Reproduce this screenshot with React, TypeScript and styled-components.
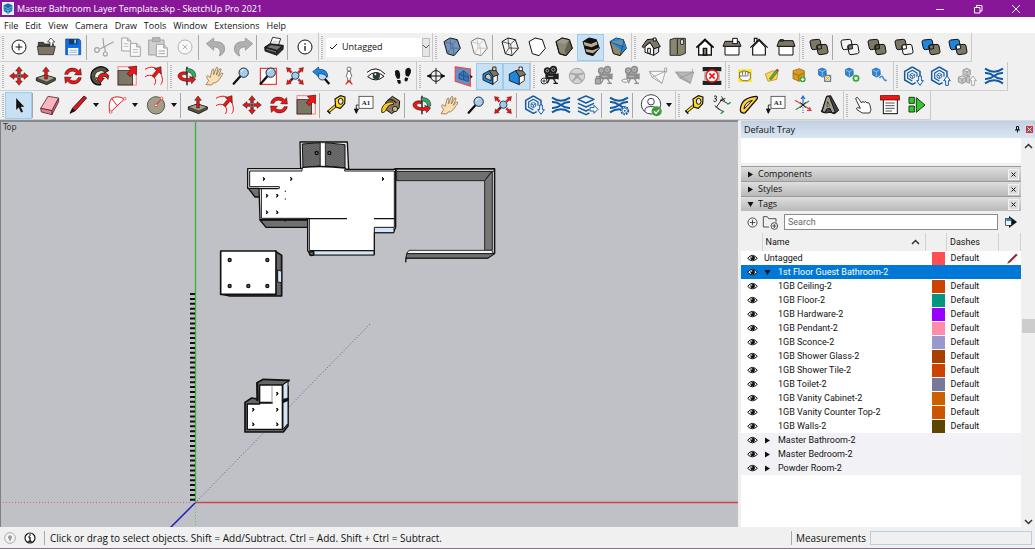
import React from "react";
import styled, { createGlobalStyle } from "styled-components";

/* ---------- palette ---------- */
const K = "#111";
const OLIVE = "#7c7865";
const OLIVE_D = "#57543f";
const RED = "#ee1515";
const BLUE = "#1f86dd";
const NAVY = "#135ba3";
const GREY = "#a3a3a3";

/* ---------- icon art, drawn in a 72 unit square ---------- */
const RedArrow = ({ angle = 0 }: { angle?: number }) => (
  <polygon
    points="36,8 46,21 40,21 40,31 32,31 32,21 26,21"
    fill={RED}
    stroke={K}
    strokeWidth="1.5"
    transform={`rotate(${angle} 36 36)`}
  />
);

const Lens = () => (
  <>
    <path d="M34 37 14 59" stroke={K} strokeWidth="7" strokeLinecap="round" />
    <circle cx="44" cy="26" r="14" fill="#a5cbea" stroke="#1a2b3c" strokeWidth="3" />
    <path d="M36 24q3-8 10-7" stroke="#eef7ff" strokeWidth="3" fill="none" />
  </>
);

const CubeLines = ({ c = K }: { c?: string }) => (
  <path
    d="M12 20 38 27 52 14M38 27 42 62M30 9 33 39 22 56M33 39 61 40"
    stroke={c}
    strokeWidth="2"
    fill="none"
  />
);
const Cube = ({ fill, stroke = K }: { fill: string; stroke?: string }) => (
  <polygon
    points="12,20 30,9 52,14 61,40 42,62 22,56"
    fill={fill}
    stroke={stroke}
    strokeWidth="3"
    strokeLinejoin="round"
  />
);

const Slab = ({ x, y, fill, stroke = K }: { x: number; y: number; fill: string; stroke?: string }) => (
  <path
    transform={`translate(${x} ${y})`}
    d="M2 8Q2 3 7 2L27 0Q32 0 33 5L36 22Q36 27 32 28L12 31Q7 31 6 26Z"
    fill={fill}
    stroke={stroke}
    strokeWidth="3"
    strokeLinejoin="round"
  />
);
const Solids = ({ a, b, m }: { a: string; b: string; m: string }) => (
  <>
    <Slab x={7} y={13} fill={a} />
    <Slab x={27} y={28} fill={b} />
    <path d="M30 31 42 29 44 41 32 43Z" fill={m} stroke={K} strokeWidth="3" />
  </>
);

const Camera = ({ c, children }: { c: string; children?: React.ReactNode }) => (
  <>
    <circle cx="28" cy="20" r="8" fill={c} stroke={c} strokeWidth="5" />
    <circle cx="46" cy="17" r="9" fill={c} stroke={c} strokeWidth="5" />
    <circle cx="28" cy="20" r="4" fill="none" stroke="#ddd" strokeWidth="2" />
    <circle cx="46" cy="17" r="5" fill="none" stroke="#ddd" strokeWidth="2" />
    <path d="M24 30H52V44H24ZM34 44 28 58M46 44 56 60M52 32 60 30V44L52 42ZM46 58H60" fill={c} stroke={c} strokeWidth="4" />
    <path d="M30 37H46" stroke="#ddd" strokeWidth="2" />
    {children}
  </>
);

const Hex = ({ children }: { children?: React.ReactNode }) => (
  <g fill="none" stroke={NAVY} strokeLinejoin="round">
    <path d="M34 9 57 22V36M34 9 11 22V48L34 61 44 56" strokeWidth="4.5" />
    <path d="M34 19 48 27V38M34 19 20 27V43L34 51" strokeWidth="3.5" />
    <path d="M34 28 41 32V40L34 44 27 40V32ZM27 32 34 36 41 32M34 36V44" strokeWidth="2.5" />
    {children}
  </g>
);
const Waves = () => (
  <path
    d="M9 14Q36 32 63 14M9 27Q24 26 36 36 48 26 63 27M9 45Q24 46 36 36 48 46 63 45M9 58Q36 40 63 58"
    fill="none"
    stroke={NAVY}
    strokeWidth="6"
  />
);
const Ball = () => (
  <>
    <path d="M13 17 24 12 36 17 37 32 26 40 14 33Z" fill="#2f83cf" stroke="#1b5da8" strokeWidth="2" />
    <path d="M15 19 25 23 35 18M25 23V38" stroke="#bfe0fa" strokeWidth="2" fill="none" />
  </>
);

const art: Record<string, React.ReactNode> = {
  new: (
    <g fill="#fff" stroke={K} strokeWidth="3">
      <circle cx="36" cy="36" r="21" />
      <path d="M36 26V46M26 36H46" />
    </g>
  ),
  open: (
    <g stroke={K} strokeWidth="2">
      <path d="M13 34V22H28L32 27H58V34Z" fill="#4c493a" />
      <path d="M10 34H64L58 59H14Z" fill={OLIVE} />
      <path d="M50 9 62 21H57Q58 34 48 36V21H41Z" fill="#fff" />
    </g>
  ),
  save: (
    <>
      <path d="M14 12H54L59 17V59H14Z" fill="#0d6fe0" stroke="#0a3f8c" strokeWidth="2" />
      <rect x="24" y="12" width="25" height="16" fill="#173a66" />
      <rect x="40" y="14" width="5" height="11" fill="#8fd0ff" />
      <rect x="21" y="39" width="31" height="20" fill="#f3f8ff" />
      <path d="M25 46H48M25 52H48" stroke="#7a96b8" strokeWidth="2" />
    </>
  ),
  cut: (
    <g fill="none" stroke={GREY} strokeWidth="3.5">
      <path d="M33 9 36 38M65 20 24 42M38 34 40 52" />
      <circle cx="15" cy="45" r="7" />
      <circle cx="40" cy="57" r="6" />
    </g>
  ),
  copy: (
    <g fill="#f8f8f8" stroke={GREY} strokeWidth="3">
      <path d="M8 9H26L35 18V48H8ZM26 9V18H35" />
      <path d="M34 25H53L64 36V64H34ZM53 25V36H64" />
      <path d="M14 26H28M14 34H28M41 44H57M41 52H57" strokeWidth="2" />
    </g>
  ),
  paste: (
    <g stroke={GREY} strokeWidth="3">
      <path d="M8 15H54V60H8Z" fill="#cfcfcf" />
      <path d="M20 8H42V20H20Z" fill="#b9b9b9" />
      <path d="M31 28H53L64 39V65H31ZM53 28V39H64M38 48H57M38 56H57" fill="#fafafa" />
    </g>
  ),
  cancel: (
    <g fill="#fafafa" stroke={GREY} strokeWidth="2.5">
      <circle cx="36" cy="36" r="21" />
      <path d="M29 29 43 43M43 29 29 43" />
    </g>
  ),
  undo: <path d="M7 26 29 9V20Q62 18 62 42 62 56 46 63 56 38 29 35V46Z" fill="#b0b0b0" stroke="#8b8b8b" strokeWidth="2" />,
  redo: <path d="M65 26 43 9V20Q10 18 10 42 10 56 26 63 16 38 43 35V46Z" fill="#b0b0b0" stroke="#8b8b8b" strokeWidth="2" />,
  print: (
    <g stroke={K} strokeWidth="2.5" strokeLinejoin="round">
      <path d="M24 28 32 7 56 11 48 34Z" fill="#fff" />
      <path d="M8 36 24 26 64 31 63 43 45 61 9 48Z" fill="#2a2a2a" />
      <path d="M12 37 26 29 60 33 45 46Z" fill="#777" />
      <path d="M14 43 42 51M33 18 50 21M31 23 48 27" stroke="#aaa" strokeWidth="2" />
    </g>
  ),
  info: (
    <g stroke={K} strokeWidth="3" fill="#fff">
      <circle cx="36" cy="36" r="21" />
      <path d="M36 33V47M36 25V29" strokeWidth="4" />
    </g>
  ),
  xray: (
    <>
      <Cube fill="#7396bd" />
      <CubeLines c="#3f5c80" />
    </>
  ),
  backEdges: (
    <>
      <Cube fill="#f7f7f7" stroke="#7a7a7a" />
      <CubeLines c="#b0b0b0" />
    </>
  ),
  wire: (
    <>
      <Cube fill="#f4f4f4" />
      <CubeLines />
    </>
  ),
  hidden: <Cube fill="#fff" />,
  shaded: (
    <>
      <Cube fill="#8c8873" />
      <path d="M52 14 61 40 42 62 38 44Z" fill="#65614d" />
      <path d="M12 20 30 9 52 14 36 27Z" fill="#a09c87" />
      <Cube fill="none" />
    </>
  ),
  textured: (
    <>
      <Cube fill="#b8ad92" />
      <path d="M12 20 30 9 52 14 54 19 36 27ZM15 31 38 37 57 28 60 38 41 46 18 42ZM20 50 42 55 58 42 42 62 22 56Z" fill={K} />
    </>
  ),
  mono: (
    <>
      <Cube fill="#8c8873" />
      <path d="M12 20 30 9 52 14 61 40 51 50Z" fill={BLUE} />
      <path d="M12 20 50 34 42 62M50 34 52 14" fill="none" stroke={K} strokeWidth="1.5" />
      <path d="M12 20 50 33 51 14Z" fill="#9b9a88" opacity=".6" />
    </>
  ),
  iso: (
    <g stroke={K} strokeWidth="3" strokeLinejoin="round">
      <path d="M18 34 35 22 44 40V61L18 52Z" fill="#fff" />
      <path d="M44 40 59 36V51L44 61Z" fill="#ddd" />
      <path d="M9 35 24 14 50 11 64 35 45 41 32 21 14 38Z" fill={OLIVE} />
      <path d="M43 9H51V18H43ZM26 40H34V56L26 53Z" fill="#fff" />
    </g>
  ),
  top: (
    <g stroke={K} strokeWidth="2.5" strokeLinejoin="round">
      <path d="M12 14 26 10H58V55L44 61H12Z" fill="#8b866f" />
      <path d="M34 12V58" />
      <path d="M44 14H52V28H44Z" fill="#fff" />
    </g>
  ),
  front: (
    <g stroke={K} strokeWidth="4">
      <path d="M17 34V60H55V34L36 16Z" fill="#fff" />
      <path d="M10 38 36 13 62 38" fill="none" strokeWidth="5" />
      <path d="M31 40H41V60H31Z" fill={OLIVE} />
    </g>
  ),
  right: (
    <g stroke={K} strokeWidth="3">
      <path d="M15 34V60H57V34Z" fill="#fff" />
      <path d="M9 34 15 19H57L63 34Z" fill={OLIVE} />
      <path d="M38 10H52V26H38Z" fill="#fff" />
    </g>
  ),
  back: (
    <g stroke={K} strokeWidth="3.5">
      <path d="M22 22V10H30V20" fill="#fff" />
      <path d="M17 36V60H55V36L36 16Z" fill="#fff" />
      <path d="M10 38 36 13 62 38" fill="none" />
    </g>
  ),
  left: (
    <g stroke={K} strokeWidth="3">
      <path d="M15 34V60H57V34Z" fill="#fff" />
      <path d="M9 34 15 17H57L63 34Z" fill={OLIVE} />
      <path d="M18 14V18H28V14Z" fill={OLIVE} />
    </g>
  ),
  outerShell: <Solids a={OLIVE} b={OLIVE} m={OLIVE} />,
  intersect: <Solids a="#f4f4f4" b="#f4f4f4" m={OLIVE} />,
  union: <Solids a={OLIVE} b={OLIVE} m={OLIVE_D} />,
  subtract: <Solids a={OLIVE} b="#f4f4f4" m="#fff" />,
  trim: <Solids a={BLUE} b={OLIVE} m={OLIVE} />,
  split: <Solids a={BLUE} b={OLIVE} m="#fff" />,

  move: (
    <>
      {[0, 90, 180, 270].map((a) => (
        <RedArrow key={a} angle={a} />
      ))}
      <circle cx="36" cy="36" r="3" fill={K} />
    </>
  ),
  push: (
    <>
      <path d="M7 42 34 33 64 42V49L38 62 7 50Z" fill={OLIVE_D} stroke={K} strokeWidth="2.5" />
      <path d="M7 42 34 33 64 42 38 54Z" fill="#a5a18c" stroke={K} strokeWidth="1.5" />
      <path d="M36 9 46 22H40V45H32V22H26Z" fill={RED} stroke={K} strokeWidth="1.5" />
    </>
  ),
  rotate: (
    <g fill={RED} stroke={K} strokeWidth="1.5">
      <path d="M11 31C15 9 44 8 52 20L59 14 61 33 41 32 46 26C38 19 24 20 21 31Z" />
      <path d="M61 41C57 63 28 64 20 52L13 58 11 39 31 40 26 46C34 53 48 52 51 41Z" />
    </g>
  ),
  follow: (
    <>
      <path d="M57 24C46 4 12 16 14 38 15 54 28 60 38 56" fill="none" stroke={K} strokeWidth="15" />
      <path d="M55 22C44 8 14 18 15 38 16 52 28 57 36 55" fill="none" stroke={OLIVE_D} strokeWidth="9" />
      <path d="M62 34C50 20 30 28 31 42L24 41 37 57 49 42 42 43C44 34 54 36 60 46Z" fill={RED} stroke={K} strokeWidth="2" />
    </>
  ),
  scale: (
    <>
      <rect x="9" y="8" width="55" height="55" fill="none" stroke="#ff7d7d" strokeWidth="3" />
      <rect x="9" y="20" width="44" height="43" fill={OLIVE} stroke={K} strokeWidth="2" />
      <path d="M65 6 64 33 57 27 46 38 36 29 47 18 40 10Z" fill={RED} stroke={K} strokeWidth="1.5" />
    </>
  ),
  offset: (
    <>
      <path d="M9 16C28 4 46 10 55 26 62 38 64 54 56 62" fill="none" stroke={RED} strokeWidth="3" />
      <path d="M9 38C22 30 36 34 40 46 42 54 40 60 36 63" fill="none" stroke={RED} strokeWidth="3" />
      <path d="M57 8 58 30 51 25 37 41 30 35 44 19 37 14Z" fill={RED} stroke={K} strokeWidth="1.5" />
    </>
  ),
  orbit: (
    <>
      <path d="M36 8V64" stroke={K} strokeWidth="4" />
      <path d="M33 14C54 12 64 24 62 39L52 42C53 30 46 23 34 24Z" fill="#39a56a" stroke={K} strokeWidth="1.5" />
      <path d="M34 24C18 22 9 28 9 36 9 48 28 54 48 52L50 59 62 45 44 37 46 43C36 46 20 43 20 36 20 32 26 31 34 32Z" fill={RED} stroke={K} strokeWidth="1.5" />
    </>
  ),
  pan: (
    <path
      d="M12 62 20 50C14 42 12 36 17 35L25 40 30 18Q33 12 36 17L35 32 43 11Q47 8 48 13L43 33 53 15Q58 13 57 18L49 37 58 27Q64 26 62 31L49 50Q40 59 33 57L29 63Z"
      fill="#f8dfb4"
      stroke="#7b5a33"
      strokeWidth="2"
    />
  ),
  zoom: <Lens />,
  zoomWindow: (
    <>
      <rect x="13" y="13" width="48" height="48" fill="#fff" stroke={RED} strokeWidth="3" />
      <Lens />
    </>
  ),
  extents: (
    <>
      <path d="M30 42 18 56" stroke={K} strokeWidth="6" />
      {[45, 135, 225, 315].map((a) => (
        <path key={a} d="M36 0 44 12H39V21H33V12H28Z" fill={RED} stroke={K} strokeWidth="1" transform={`rotate(${a} 36 36)`} />
      ))}
      <circle cx="37" cy="35" r="11" fill="#a5cbea" stroke="#1a2b3c" strokeWidth="2.5" />
    </>
  ),
  previous: (
    <>
      <path d="M44 44 58 60" stroke={K} strokeWidth="7" />
      <circle cx="37" cy="35" r="13" fill="#bcd9ef" stroke="#1a2b3c" strokeWidth="2.5" />
      <path d="M8 23 26 9V16Q54 14 53 40 44 28 26 29V38Z" fill={BLUE} stroke="#0c3c70" strokeWidth="2" />
    </>
  ),
  person: (
    <g fill="#fff" stroke="#555" strokeWidth="2.5">
      <path d="M32 22 28 38 32 42V54H40V42L44 38 40 22Z" />
      <circle cx="36" cy="15" r="6" />
      <path d="M26 61 36 50 46 61" stroke={RED} fill="none" strokeWidth="4" />
    </g>
  ),
  eye: (
    <>
      <path d="M9 25Q36 2 63 30M11 38Q34 14 60 37 36 58 11 38Z" fill="#fff" stroke={K} strokeWidth="3" />
      <circle cx="37" cy="35" r="11" fill="#2b3a3a" />
      <circle cx="34" cy="31" r="3" fill="#fff" />
    </>
  ),
  feet: (
    <path
      d="M12 22Q18 14 25 22 30 34 26 44H18Q10 32 12 22ZM18 48H28Q32 60 25 60 19 58 18 48ZM44 16Q54 6 60 18 62 28 53 38L44 35Q41 24 44 16ZM43 40 52 43Q50 54 43 52 38 49 43 40Z"
      fill={K}
    />
  ),
  section: (
    <g fill="none" stroke={K} strokeWidth="3">
      <circle cx="36" cy="36" r="16" />
      <path d="M36 12V60M10 36H62" />
      <path d="M10 36 20 31V41ZM62 36 52 31V41Z" fill={K} />
    </g>
  ),
  planes: (
    <>
      <path d="M13 9 58 15V66L13 52Z" fill="#5f93c9" stroke="#ee4a56" strokeWidth="4" />
      <path d="M24 30 38 20 52 32V52L24 44ZM38 20V48M24 30 52 40" fill="#3a76b8" stroke="#214d80" strokeWidth="2.5" />
      <path d="M58 32 65 38 58 44Z" fill={K} />
    </>
  ),
  cuts: (
    <g stroke={K} strokeWidth="2.5" strokeLinejoin="round">
      <path d="M15 30 34 20 45 36V62L15 48Z" fill={BLUE} />
      <path d="M45 37 58 32V50L45 60Z" fill="#fff" />
      <path d="M34 20 52 16 62 32 46 38Z" fill={OLIVE} />
      <path d="M44 9H54V20H44ZM23 33 33 29 39 38V50L23 43Z" fill="#d8c9b4" />
    </g>
  ),
  fill: (
    <g stroke={K} strokeWidth="2.5" strokeLinejoin="round">
      <path d="M13 30 32 20 43 36V62L13 50Z" fill={BLUE} />
      <path d="M43 37 58 32V50L43 60Z" fill="#fff" />
      <path d="M32 20 50 16 62 32 44 38Z" fill={OLIVE} />
      <path d="M42 9H52V20H42Z" fill="#fff" />
    </g>
  ),
  camAdd: (
    <Camera c="#1d1d1d">
      <circle cx="18" cy="51" r="9" fill="#fff" stroke={K} strokeWidth="2.5" />
      <path d="M18 46V56M13 51H23" stroke={K} strokeWidth="2.5" />
    </Camera>
  ),
  camView: (
    <g stroke="#a5a5a5" strokeWidth="3" fill="#d4d4d4">
      <circle cx="36" cy="36" r="23" />
      <path d="M16 28Q36 34 56 28M22 52 34 40H40L52 52" fill="none" strokeWidth="5" />
      <circle cx="36" cy="36" r="5" fill="#a5a5a5" />
    </g>
  ),
  camLock: (
    <Camera c="#8e8e8e">
      <path d="M10 44H26V60H10ZM13 44V37H23V44" fill="#aaa" stroke="#777" strokeWidth="2.5" />
    </Camera>
  ),
  camLook: (
    <Camera c="#8e8e8e">
      <path d="M8 50Q18 40 28 50 18 60 8 50Z" fill="#fff" stroke="#777" strokeWidth="2.5" />
    </Camera>
  ),
  frustumWire: (
    <path d="M10 22H58L48 58 18 40ZM10 22 48 58M58 22 18 40M56 12H62V24H56Z" fill="#f8f8f8" stroke="#9b9b9b" strokeWidth="2.5" />
  ),
  frustum: (
    <>
      <path d="M8 24H62L52 58 20 42Z" fill="#b9b9b9" stroke="#9a9a9a" strokeWidth="2.5" />
      <path d="M8 24 52 58M62 24 20 42M58 14V24" stroke="#8d8d8d" strokeWidth="2" />
    </>
  ),
  film: (
    <>
      <path d="M8 9H64V22H8ZM8 50H64V63H8Z" fill="#222" />
      <path d="M12 24H60V48H12Z" fill="#bbb" />
      <circle cx="36" cy="36" r="18" fill="#fff" stroke={RED} strokeWidth="4" />
      <path d="M28 28 44 44M44 28 28 44" stroke={RED} strokeWidth="5" />
    </>
  ),
  fist: (
    <>
      <rect x="16" y="16" width="40" height="38" fill="#ffe21a" />
      <path d="M20 24H29V21H37V23H45V26H52V44L44 50H28L20 42ZM29 24V34M37 24V34M45 26V36M20 36H44" fill="#fff" stroke="#333" strokeWidth="2" />
    </>
  ),
  edit: (
    <>
      <path d="M16 30 40 20 54 28 50 46 24 52Z" fill="#ffd84d" stroke="#a97a12" strokeWidth="2" />
      <path d="M28 44 48 18 54 23 34 47Z" fill="#5fae4d" stroke="#3c5a2c" strokeWidth="2" />
      <path d="M48 18 51 14 57 19 54 23Z" fill={RED} />
    </>
  ),
  boxAdd: (
    <>
      <path d="M18 20 36 14 52 20V44L36 52 18 44Z" fill="#d99a22" stroke="#8a5a0b" strokeWidth="2" />
      <path d="M18 28 35 34 52 27M35 34V52" stroke="#8a5a0b" strokeWidth="2" fill="none" />
      <circle cx="47" cy="46" r="9" fill="#42a83a" />
      <path d="M47 41V51M42 46H52" stroke="#fff" strokeWidth="3" />
    </>
  ),
  ballMove: (
    <>
      <Ball />
      <rect x="32" y="34" width="18" height="18" fill="#ffe9a5" stroke="#2b6fc0" strokeWidth="3" />
      <path d="M32 34 50 52M50 34 32 52" stroke="#e0a020" strokeWidth="3" />
    </>
  ),
  ballCycle: (
    <>
      <Ball />
      <circle cx="45" cy="43" r="8" fill="#dff3d7" stroke="#35a83a" strokeWidth="5" />
    </>
  ),
  ballLink: (
    <>
      <Ball />
      <path d="M34 42Q42 32 46 42T56 48" fill="none" stroke="#4e8fd0" strokeWidth="5" />
    </>
  ),
  hexDown: (
    <Hex>
      <path d="M53 36H61V50H67L57 64 47 50H53Z" fill="#fff" strokeWidth="3" />
    </Hex>
  ),
  hexUp: (
    <Hex>
      <path d="M53 64H61V50H67L57 36 47 50H53Z" fill="#fff" strokeWidth="3" />
    </Hex>
  ),
  blocks: (
    <g fill="#c4c4c4" stroke="#999" strokeWidth="2.5" strokeLinejoin="round">
      <path d="M24 18 36 13 46 18V32L36 37 24 32ZM24 18 36 23 46 18M36 23V37" />
      <path d="M10 40 22 35 32 40V54L22 59 10 54ZM10 40 22 45 32 40M22 45V59" />
      <path d="M34 40 44 36V58L34 54Z" />
      <path d="M50 64H58V50H64L54 36 44 50H50Z" fill="#fff" />
    </g>
  ),
  waves: <Waves />,

  select: <path d="M27 14V52L35 44 42 59 49 56 42 42H53Z" fill={K} stroke="#fff" strokeWidth="1" />,
  eraser: (
    <g stroke="#5b2631" strokeWidth="2.5" strokeLinejoin="round">
      <path d="M8 46 30 10 62 15 42 53Z" fill="#f7b6c0" />
      <path d="M8 46 42 53V65L10 57Z" fill="#e27f8f" />
      <path d="M62 15V26L42 65V53Z" fill="#d06b7d" />
    </g>
  ),
  pencil: (
    <>
      <path d="M12 61 20 45 54 9 62 15 28 53Z" fill="#d4191f" stroke="#3b0b0b" strokeWidth="2.5" />
      <path d="M12 61 19 46 28 53Z" fill={K} />
    </>
  ),
  arc: (
    <>
      <path d="M15 56Q8 32 20 16 38 6 58 18L17 57M20 16 36 38" fill="#fff" stroke={RED} strokeWidth="3" />
      <circle cx="17" cy="57" r="4" fill="#fff" stroke={RED} strokeWidth="2" />
      <circle cx="59" cy="17" r="4" fill="#fff" stroke={RED} strokeWidth="2" />
    </>
  ),
  circle: (
    <>
      <circle cx="36" cy="37" r="26" fill="#a29e8c" stroke="#5a574a" strokeWidth="3" />
      <path d="M36 37 52 18" stroke={RED} strokeWidth="3" />
      <circle cx="36" cy="37" r="4" fill="#fff" stroke={RED} strokeWidth="2" />
      <circle cx="53" cy="16" r="4" fill="#fff" stroke={RED} strokeWidth="2" />
    </>
  ),
  tape: (
    <>
      <path d="M32 38 10 57" stroke={K} strokeWidth="9" />
      <path d="M32 38 12 55" stroke="#ffd91f" strokeWidth="5" />
      <path d="M30 18 46 8 60 12 59 32 46 46 32 42Z" fill="#ffd91f" stroke={K} strokeWidth="3.5" strokeLinejoin="round" />
      <ellipse cx="47" cy="25" rx="7" ry="9" fill="#e8e8e8" stroke={K} strokeWidth="3" />
      <path d="M7 53 16 62" stroke={K} strokeWidth="4" />
    </>
  ),
  label: (
    <>
      <rect x="21" y="10" width="42" height="36" fill="#fff" stroke="#444" strokeWidth="2.5" />
      <path d="M20 36H13V60M7 48 13 61 19 48Z" fill="none" stroke={K} strokeWidth="2.5" />
      <path d="M7 48H19L13 61Z" fill={K} />
      <text x="42" y="35" fontFamily="Liberation Serif, serif" fontWeight="700" fontSize="21" textAnchor="middle" fill="#222">
        A1
      </text>
    </>
  ),
  bucket: (
    <>
      <path d="M20 28 40 10 62 24 60 46 38 62 18 48Z" fill="#8a7a5e" stroke={K} strokeWidth="3" />
      <path d="M26 22Q38 14 52 30" stroke="#2b2b2b" strokeWidth="4" fill="none" />
      <path d="M8 58Q6 34 28 28 44 24 44 34 30 34 24 44 18 62 8 58Z" fill="#ffc81f" stroke={K} strokeWidth="2.5" />
      <circle cx="48" cy="48" r="8" fill="#c9b28a" stroke={K} strokeWidth="2.5" />
    </>
  ),
  layers: (
    <g fill="none" stroke={NAVY} strokeWidth="4.5" strokeLinejoin="round">
      <path d="M30 9 54 19 30 30 6 19ZM6 31 30 42 54 31M6 43 30 54 40 49M6 54 30 65 40 60" />
      <path d="M42 44H54V37L66 49 54 61V54H42Z" fill="#fff" strokeWidth="3" />
    </g>
  ),
  wavesGear: (
    <>
      <Waves />
      <circle cx="53" cy="53" r="11" fill="#fff" stroke={NAVY} strokeWidth="5" strokeDasharray="5 3" />
      <circle cx="53" cy="53" r="8" fill="#fff" stroke={NAVY} strokeWidth="2.5" />
      <circle cx="53" cy="53" r="3" fill={NAVY} />
    </>
  ),
  account: (
    <>
      <g fill="#fff" stroke="#3b4252" strokeWidth="3">
        <circle cx="36" cy="34" r="29" />
        <circle cx="36" cy="26" r="10" />
        <path d="M18 55V50Q20 41 30 41H42Q52 41 54 50" />
      </g>
      <circle cx="53" cy="55" r="15" fill="#3f9a35" />
      <path d="M45 55 51 61 61 50" fill="none" stroke="#fff" strokeWidth="4" />
    </>
  ),
  dimension: (
    <g fill="none" stroke={K} strokeWidth="2.5">
      <path d="M18 44 38 16M14 38 28 48M34 10 44 24M30 24 46 16M32 20 54 32M40 56 22 46" />
      <path d="M12 10Q20 6 20 12 20 17 14 17 22 17 20 23 16 28 10 24" />
      <path d="M52 34 62 28M32 62 42 54" stroke="#2a9c3a" strokeWidth="4" />
    </g>
  ),
  protractor: (
    <>
      <path d="M10 52Q10 14 58 10 64 12 60 18L24 60Q12 62 10 52Z" fill="#ffd23c" stroke={K} strokeWidth="3.5" strokeLinejoin="round" />
      <path d="M21 48Q22 28 46 22Z" fill="#f4f4f4" stroke={K} strokeWidth="3" />
    </>
  ),
  axes: (
    <g strokeWidth="3.5" fill="none">
      <path d="M36 36V10M30 18 36 9 42 18" stroke="#2170c8" />
      <path d="M36 36 58 50M12 22 36 36M48 52H60L55 42" stroke="#d8404a" />
      <path d="M36 36 14 50M36 36 54 24" stroke="#2a9c3a" />
      <path d="M36 36V62" stroke="#2170c8" strokeDasharray="3 4" />
      <path d="M28 28 44 44M44 28 28 44" stroke={K} strokeWidth="2.5" />
    </g>
  ),
  text3d: (
    <g stroke={K} strokeWidth="3" strokeLinejoin="round">
      <path d="M26 10 38 8 62 52 50 62 36 58 22 60 10 56 14 46Z" fill="#444" />
      <path d="M26 10 34 10 52 58 42 60 36 46 26 48 22 58 12 56Z" fill="#a09b88" />
      <path d="M29 26 34 38 27 40Z" fill="#f0f0f0" strokeWidth="2" />
    </g>
  ),
  touch: (
    <path
      d="M14 16Q18 10 22 16L32 30Q34 22 40 28 44 22 48 30 54 26 56 34L60 50 56 60H34L18 50Q14 44 22 44L28 46 16 22Z"
      fill="#fff"
      stroke={K}
      strokeWidth="2.5"
    />
  ),
  report: (
    <>
      <rect x="16" y="10" width="42" height="52" fill="#fff" stroke={K} strokeWidth="3" />
      <rect x="7" y="8" width="57" height="13" fill={RED} stroke="#5b0000" strokeWidth="2" />
      <path d="M22 30H50M22 38H50M22 46H50M22 54H42" stroke="#555" strokeWidth="3" />
    </>
  ),
  generate: (
    <g fill="#33c82e" stroke="#1a3d18" strokeWidth="3">
      <path d="M12 13H28V31H12ZM12 39H28V57H12ZM34 14 60 36 34 58Z" />
    </g>
  ),
};

const Icon = ({ name }: { name: string }) => (
  <svg width="24" height="24" viewBox="0 0 72 72" fill="none" aria-hidden="true">
    {art[name]}
  </svg>
);

/* ---------- page ---------- */
const Global = createGlobalStyle`
  * { box-sizing: border-box; }
  body { margin: 0; background: #f0f0f0; }
  button, input, select { font: inherit; color: inherit; margin: 0; }
`;
const Shell = styled.div`
  display: flex;
  flex-direction: column;
  height: 100vh;
  min-height: 400px;
  overflow: hidden;
  color: #111;
  background: #f0f0f0;
  font: 9px/14px "Open Sans", "Noto Sans", sans-serif;
`;
const TitleBar = styled.header`
  display: flex;
  align-items: center;
  height: 17px;
  flex: none;
  padding-left: 2px;
  gap: 3px;
  background: #881798;
  color: #fff;
`;
const Title = styled.h1`
  margin: 0;
  flex: 1;
  font-size: 9px;
  font-weight: 400;
  white-space: nowrap;
`;
const Controls = styled.div`
  display: flex;
`;
const WindowButton = styled.button`
  width: 38px;
  height: 17px;
  padding: 0;
  border: 0;
  background: none;
  display: grid;
  place-items: center;
`;
const MenuBar = styled.nav`
  display: flex;
  gap: 7px;
  height: 16px;
  flex: none;
  padding-left: 4px;
  background: #fff;
`;
const MenuItem = styled.button`
  border: 0;
  padding: 2px 0 0;
  background: none;
  line-height: 14px;
`;
const ToolRow = styled.div`
  display: flex;
  height: 29px;
  flex: none;
`;
const Group = styled.div`
  display: flex;
  align-items: center;
  padding-left: 5px;
  border-right: 1px solid #c9c9c9;
  border-bottom: 1px solid #d0d0d0;
  background: repeating-linear-gradient(#b9b9b9 0 1px, #f0f0f0 1px 2px) 2px 3px / 2px 23px no-repeat #f0f0f0;
`;
const Tool = styled.button<{ $on?: boolean; $menu?: boolean }>`
  display: flex;
  align-items: center;
  justify-content: center;
  width: ${(p) => (p.$menu ? 39 : 27)}px;
  height: 27px;
  padding: 0;
  border: 1px solid ${(p) => (p.$on ? "#9ccbf0" : "transparent")};
  background: ${(p) => (p.$on ? "#c7e0f4" : "none")};
`;
const Split = styled.span`
  width: 4px;
  height: 25px;
  border-left: 1px solid #a8a8a8;
  flex: none;
`;
const Caret = styled.span`
  border: 3px solid transparent;
  border-top: 4px solid #111;
  border-bottom: 0;
  margin-left: 3px;
`;
const Combo = styled.label`
  display: flex;
  align-items: center;
  width: 104px;
  height: 19px;
  margin: 0 2px;
  padding-left: 3px;
  gap: 4px;
  background: #fff;
`;
const ComboSelect = styled.select`
  appearance: none;
  flex: 1;
  min-width: 0;
  border: 0;
  padding: 0;
  background: none;
`;
const ComboArrow = styled.span`
  display: grid;
  place-items: center;
  width: 8px;
  height: 19px;
  border: 1px solid #bdbdbd;
  background: #e6e6e6;
`;

const Main = styled.main`
  display: flex;
  flex: 1;
  min-height: 0;
`;
const Viewport = styled.section`
  position: relative;
  flex: 1;
  min-width: 0;
  border-top: 2px solid #8a8a8d;
  border-left: 1px solid #808080;
  background: #c0c0c7;
`;
const ViewName = styled.span`
  position: absolute;
  left: 2px;
  top: 1px;
  font: 8px/10px "DejaVu Sans", sans-serif;
  color: #333;
`;
const Scene = styled.svg`
  display: block;
  width: 100%;
  height: 100%;
`;
const Tray = styled.aside`
  display: flex;
  flex-direction: column;
  width: 297px;
  flex: none;
  padding-left: 3px;
  border-top: 1px solid #d5dbe2;
`;
const TrayTitle = styled.header`
  display: flex;
  align-items: center;
  gap: 5px;
  height: 17px;
  flex: none;
  padding: 0 2px 0 3px;
  background: linear-gradient(#c2d0e0, #dae6f3);
`;
const TrayName = styled.h2`
  flex: 1;
  margin: 0;
  font-size: 9px;
  font-weight: 400;
`;
const TinyButton = styled.button<{ $red?: boolean }>`
  display: grid;
  place-items: center;
  width: 7px;
  height: 7px;
  padding: 0;
  border: 0;
  background: ${(p) => (p.$red ? "#c8393f" : "none")};
`;
const TrayBody = styled.div`
  display: flex;
  flex: 1;
  min-height: 0;
`;
const Panels = styled.div`
  display: flex;
  flex-direction: column;
  flex: 1;
  min-width: 0;
  background: #fff;
`;
const PanelGap = styled.div`
  height: 28px;
  flex: none;
  border-bottom: 3px solid #f0f0f0;
`;
const PanelHead = styled.div`
  display: flex;
  align-items: center;
  height: 15px;
  flex: none;
  padding: 0 2px 0 6px;
  border-top: 1px solid #9b9b9b;
  background: linear-gradient(#dedede, #b9b9b9);
`;
const PanelToggle = styled.button`
  display: flex;
  align-items: center;
  gap: 4px;
  flex: 1;
  padding: 0;
  border: 0;
  background: none;
  text-align: left;
  font-size: 9px;
  line-height: 14px;
`;
const PanelClose = styled.button`
  display: grid;
  place-items: center;
  width: 11px;
  height: 11px;
  padding: 0;
  border: 1px solid #f2f2f2;
  background: #dcdcdc;
`;
const SearchRow = styled.div`
  display: flex;
  align-items: center;
  height: 22px;
  flex: none;
  padding: 0 4px 0 6px;
  background: #f0f0f0;
`;
const PlainButton = styled.button`
  display: grid;
  place-items: center;
  padding: 0;
  border: 0;
  background: none;
`;
const Search = styled.input`
  flex: 1;
  min-width: 0;
  height: 16px;
  margin: 0 7px 0 4px;
  padding: 0 3px;
  border: 1px solid #8b8b8b;
  background: #fff;
  font-family: Roboto, sans-serif;
  &::placeholder {
    color: #666;
    opacity: 1;
  }
`;
const Table = styled.table`
  width: 100%;
  flex: none;
  border-collapse: collapse;
  table-layout: fixed;
  font-family: Roboto, "Open Sans", sans-serif;
`;
const Th = styled.th<{ $w?: number }>`
  width: ${(p) => (p.$w ? `${p.$w}px` : "auto")};
  height: 18px;
  padding: 0 5px 0 3px;
  border-right: 1px solid #d2d2d2;
  background: #f0f0f0;
  font-weight: 400;
  text-align: left;
`;
const HeadName = styled.span`
  display: flex;
  justify-content: space-between;
  align-items: center;
`;
const Row = styled.tr<{ $kind: "plain" | "selected" | "folder" }>`
  height: 14px;
  background: ${(p) => ({ plain: "#fff", selected: "#0078d7", folder: "#f1f1f6" })[p.$kind]};
  color: ${(p) => (p.$kind === "selected" ? "#fff" : "#111")};
`;
const Td = styled.td<{ $pad?: number }>`
  height: 14px;
  padding: 0 0 0 ${(p) => p.$pad ?? 0}px;
  line-height: 14px;
  white-space: nowrap;
  svg {
    display: block;
  }
`;
const Folder = styled.span`
  display: flex;
  align-items: center;
  gap: 7px;
`;
const Swatch = styled.input`
  appearance: none;
  display: block;
  width: 13px;
  height: 13px;
  padding: 0;
  border: 0;
  background: none;
  &::-webkit-color-swatch-wrapper {
    padding: 0;
  }
  &::-webkit-color-swatch {
    border: 0;
    border-radius: 0;
  }
`;
const ScrollBar = styled.div`
  display: flex;
  flex-direction: column;
  align-items: center;
  width: 14px;
  padding: 5px 0 2px;
  background: #f0f0f0;
`;
const Track = styled.div`
  display: flex;
  flex-direction: column;
  flex: 1;
  &::before {
    content: "";
    height: 46%;
  }
`;
const Thumb = styled.span`
  width: 13px;
  height: 14px;
  background: #cdcdcd;
`;
const StatusBar = styled.footer`
  display: flex;
  align-items: center;
  gap: 8px;
  height: 22px;
  flex: none;
  padding: 0 3px 0 4px;
  border-bottom: 1px solid #857089;
  font-size: 10px;
`;
const Hint = styled.span`
  flex: 1;
  min-width: 0;
  padding-left: 5px;
  border-left: 1px solid #a8a8a8;
  white-space: nowrap;
  overflow: hidden;
`;
const Measure = styled.label`
  display: flex;
  align-items: center;
  gap: 4px;
  padding-left: 4px;
  border-left: 1px solid #a8a8a8;
`;
const MeasureInput = styled.input`
  width: 162px;
  height: 14px;
  padding: 0 3px;
  border: 1px solid #b9cce0;
  background: #f0f0f0;
`;

/* ---------- data ---------- */
/* In a toolbar: "|" is a separator, "*" marks a pressed tool, "+" a tool with a menu. */
const rows: string[][] = [
  [
    "new open save | cut copy paste cancel | undo redo | print | info",
    "#combo",
    "xray backEdges | wire hidden shaded *textured mono",
    "iso top front right back left",
    "outerShell | intersect union subtract trim split",
  ],
  [
    "move push rotate follow scale offset",
    "orbit pan zoom zoomWindow extents previous person eye feet",
    "section planes *cuts *fill",
    "camAdd camView camLock camLook frustumWire frustum film",
    "fist edit boxAdd ballMove ballCycle ballLink",
    "hexDown hexUp blocks waves",
  ],
  [
    "*select | eraser pencil+ arc+ circle+ | push offset move rotate scale | tape label bucket | orbit pan zoom extents | hexDown waves layers | wavesGear | account+",
    "tape dimension protractor label axes text3d",
    "touch report generate",
  ],
];
const menus = ["File", "Edit", "View", "Camera", "Draw", "Tools", "Window", "Extensions", "Help"];
const tags: [string, string][] = [
  ["1GB Ceiling-2", "#cc4400"],
  ["1GB Floor-2", "#009681"],
  ["1GB Hardware-2", "#9900ff"],
  ["1GB Pendant-2", "#ff8cab"],
  ["1GB Sconce-2", "#9a97cf"],
  ["1GB Shower Glass-2", "#a84000"],
  ["1GB Shower Tile-2", "#cc4400"],
  ["1GB Toilet-2", "#757899"],
  ["1GB Vanity Cabinet-2", "#cc6000"],
  ["1GB Vanity Counter Top-2", "#cc5500"],
  ["1GB Walls-2", "#5e4600"],
];
const folders = ["Master Bathroom-2", "Master Bedroom-2", "Powder Room-2"];

/* ---------- parts ---------- */
const WindowControls = () => (
  <Controls>
    {[
      ["Minimize", "M1 5.5H9"],
      ["Restore", "M1.5 3.5H7V9H1.5ZM3.5 3.5V1.5H9V7H7"],
      ["Close", "M1 1 9 9M9 1 1 9"],
    ].map(([label, d]) => (
      <WindowButton key={label} aria-label={label}>
        <svg width="10" height="10" viewBox="0 0 10 10">
          <path d={d} stroke="#fff" fill="none" />
        </svg>
      </WindowButton>
    ))}
  </Controls>
);

const ToolGroup = ({ spec }: { spec: string }) => (
  <Group role="toolbar">
    {spec === "#combo" ? (
      <Combo>
        <svg width="9" height="8" viewBox="0 0 9 8">
          <path d="M1 4 3 6 8 1" stroke="#111" fill="none" />
        </svg>
        <ComboSelect aria-label="Active tag">
          <option>Untagged</option>
        </ComboSelect>
        <ComboArrow>
          <svg width="6" height="4" viewBox="0 0 6 4">
            <path d="M0 0 3 3 6 0" stroke="#555" fill="none" />
          </svg>
        </ComboArrow>
      </Combo>
    ) : (
      spec.split(" ").map((raw, i) => {
        if (raw === "|") return <Split key={i} />;
        const name = raw.replace(/[*+]/g, "");
        const on = raw.startsWith("*");
        const menu = raw.endsWith("+");
        return (
          <Tool key={i} $on={on} $menu={menu} aria-label={name} aria-pressed={on}>
            <Icon name={name} />
            {menu && <Caret />}
          </Tool>
        );
      })
    )}
  </Group>
);

const Eye = () => (
  <svg width="11" height="8" viewBox="0 0 33 24">
    <path d="M2 13Q16-5 31 13 16 28 2 13Z" fill="#fff" stroke={K} strokeWidth="3" />
    <circle cx="17" cy="12" r="7" fill={K} />
    <circle cx="14" cy="9" r="2" fill="#fff" />
  </svg>
);
const Tri = ({ open }: { open?: boolean }) => (
  <svg width="7" height="7" viewBox="0 0 14 14">
    <path d={open ? "M1 2H13L7 12Z" : "M2 1 12 7 2 13Z"} fill={K} />
  </svg>
);
const Cross = ({ c = K }: { c?: string }) => (
  <svg width="5" height="5" viewBox="0 0 10 10">
    <path d="M1 1 9 9M9 1 1 9" stroke={c} strokeWidth="2" />
  </svg>
);
const Chevron = ({ down }: { down?: boolean }) => (
  <svg width="9" height="6" viewBox="0 0 18 12">
    <path d={down ? "M2 2 9 9 16 2" : "M2 10 9 3 16 10"} stroke="#333" strokeWidth="3" fill="none" />
  </svg>
);

/* small round studs; on a wall only half of each shows */
const studs = (pts: number[][], half?: boolean) =>
  pts.map(([x, y], i) =>
    half ? (
      <path key={i} d={`M${x - 3} ${y - 5}q9 5 0 10q3-5 0-10z`} fill={K} stroke={K} strokeWidth="3" />
    ) : (
      <circle key={i} cx={x} cy={y} r="4.5" fill="#888" stroke={K} strokeWidth="4" />
    )
  );

const Model = () => (
  <Scene aria-label="Model view">
    <defs>
      <pattern id="hatch" width="5" height="5" patternUnits="userSpaceOnUse" patternTransform="rotate(30)">
        <rect width="5" height="5" fill="#7d7d7d" />
        <path d="M0 2H5" stroke="#444" strokeWidth="2" />
      </pattern>
    </defs>
    <g transform="translate(-1 -122)">
      {/* axes */}
      <path d="M195.5 122V502" stroke="#35b535" strokeWidth="1.3" />
      <path d="M195.5 503V540" stroke="#5fbf5f" strokeDasharray="1 2" />
      <path d="M195 502.5H3000" stroke="#c8464c" strokeWidth="1.5" />
      <path d="M0 502.5H190" stroke="#cf6a70" strokeDasharray="1 2" />
      <path d="M195 503 371 323" stroke="#5a5ac4" strokeDasharray="1 2" />
      <path d="M195 503 160 538" stroke="#2020b8" strokeWidth="1.5" />
      <path d="M192.5 293V503" stroke={K} strokeWidth="5" strokeDasharray="2 2.9" />

      {/* main floor and ceiling plan */}
      <g transform="translate(210 130) scale(.33333)" stroke={K} strokeWidth="4" strokeLinejoin="round">
        <path d="M113 172 135 201 155 201 155 175Z" fill="#707070" />
        <path d="M150 270 168 292 300 292V270Z" fill="#707070" />
        <path d="M270 36 412 36 416 118H272Z" fill="#e8e8e8" />
        <path d="M277 42 331 38V108L279 114Z" fill="url(#hatch)" strokeWidth="3" />
        <path d="M346 38 405 44V114L346 108Z" fill="url(#hatch)" strokeWidth="3" />
        <path d="M331 38H346V110H331Z" fill="#fff" strokeWidth="2" />
        <path d="M553 116H854V370L834 384H588L587 397M854 370H594L588 384" fill="none" />
        <path d="M560 124H845L824 152H560Z" fill="#707070" strokeWidth="2.5" />
        <path d="M847 124V361H824V152Z" fill="#777" strokeWidth="2.5" />
        <path d="M845 361H597L590 371H850Z" fill="#f2f2f2" strokeWidth="2.5" />
        <path d="M590 371H854L834 384H588Z" fill="#707070" strokeWidth="2.5" />
        <path d="M560 118H852V124H560Z" fill="#e8e8e8" strokeWidth="2.5" />
        <path
          d="M113 116H276L279 112Q340 106 405 114L408 118H557V292L550 308H493V374H302L293 362V269H150L147 175H113Z"
          fill="#fff"
        />
        <path d="M493 292H552V308H493Z" fill="#d4e6f5" strokeWidth="3" />
        <path d="M302 362H492V375H302Z" fill="#d4e6f5" strokeWidth="3" />
        <path d="M119 170V123H276V118M404 118V123H553V292M119 170H208V176M154 176V265H298V362H490" fill="none" strokeWidth="3" />
        <path d="M290 266H411M492 266H553M147 176H206" fill="none" />
        <circle cx="305" cy="370" r="7" fill="#555" />
        {studs([[163, 147], [245, 147], [520, 147], [172, 197], [203, 197], [172, 247], [203, 247]], true)}
        {studs([[320, 69], [358, 69]])}
        <path d="M226 182V186M226 205V209M226 271V275" strokeWidth="3" />
      </g>

      {/* powder room ceiling */}
      <g transform="translate(210 130) scale(.33333)" stroke={K} strokeWidth="5" strokeLinejoin="round">
        <path d="M197 364 215 376V498H60L33 492Z" fill="#666" />
        <path d="M203 420 215 424V458L203 456Z" fill="#d4e6f5" strokeWidth="3" />
        <path d="M32 363H198V493H32Z" fill="#fff" />
        {studs([[59, 390], [172, 390], [59, 468], [115, 468], [172, 468]])}
      </g>

      {/* small bathroom */}
      <g transform="translate(160 370) scale(.33333)" stroke={K} strokeWidth="5" strokeLinejoin="round">
        <path d="M291 38 310 28 388 31 370 44 384 50V168L370 186H255V97L275 84 293 87Z" fill="#666" />
        <path d="M369 44 384 34V160L369 178Z" fill="#d4e6f5" strokeWidth="3" />
        <path d="M369 88 384 84V92L369 98Z" fill={K} strokeWidth="2" />
        <path d="M299 45H367V178H262V102H299Z" fill="#fff" strokeWidth="4" />
        <path d="M299 98H338M292 38V94" fill="none" strokeWidth="6" />
        <path d="M336 46V98" stroke="#999" strokeWidth="3" />
        {studs([[281, 119], [353, 119], [281, 163], [353, 163], [353, 71]], true)}
      </g>
    </g>
  </Scene>
);

export default function App() {
  return (
    <>
      <Global />
      <Shell>
        <TitleBar>
          <svg width="12" height="13" viewBox="0 0 36 39">
            <path d="M0 0H36V39H0Z" fill="#dff1fb" />
            <path d="M5 10 18 4 31 10V26L18 35 5 26Z" fill="#1d6da8" />
            <path d="M5 14 18 20 31 14M5 21 18 27 31 21M18 20V35" stroke="#8fc7e8" strokeWidth="2" fill="none" />
          </svg>
          <Title>Master Bathroom Layer Template.skp - SketchUp Pro 2021</Title>
          <WindowControls />
        </TitleBar>
        <MenuBar>
          {menus.map((m) => (
            <MenuItem key={m}>{m}</MenuItem>
          ))}
        </MenuBar>
        {rows.map((groups, i) => (
          <ToolRow key={i}>
            {groups.map((g) => (
              <ToolGroup key={g} spec={g} />
            ))}
          </ToolRow>
        ))}

        <Main>
          <Viewport>
            <Model />
            <ViewName>Top</ViewName>
          </Viewport>
          <Tray>
            <TrayTitle>
              <TrayName>Default Tray</TrayName>
              <TinyButton aria-label="Pin">
                <svg width="5" height="7" viewBox="0 0 10 14">
                  <path d="M3 1H7V7H3ZM0 8H10M5 8V13" stroke={K} strokeWidth="2" fill="none" />
                </svg>
              </TinyButton>
              <TinyButton $red aria-label="Close tray">
                <Cross c="#fff" />
              </TinyButton>
            </TrayTitle>
            <TrayBody>
              <Panels>
                <PanelGap />
                {["Components", "Styles", "Tags"].map((p) => (
                  <PanelHead key={p}>
                    <PanelToggle aria-expanded={p === "Tags"}>
                      <Tri open={p === "Tags"} />
                      {p}
                    </PanelToggle>
                    <PanelClose aria-label={`Close ${p}`}>
                      <Cross />
                    </PanelClose>
                  </PanelHead>
                ))}
                <SearchRow>
                  <PlainButton aria-label="Add tag">
                    <svg width="11" height="11" viewBox="0 0 36 36" fill="none" stroke="#222" strokeWidth="2.5">
                      <circle cx="18" cy="18" r="15" />
                      <path d="M18 9V27M9 18H27" />
                    </svg>
                  </PlainButton>
                  <PlainButton aria-label="Add tag folder">
                    <svg width="22" height="15" viewBox="0 0 66 45" fill="none" stroke="#333" strokeWidth="2.5">
                      <path d="M33 36H16V5H28L32 11H54V22" />
                      <circle cx="49" cy="33" r="10" fill="#f0f0f0" />
                      <path d="M49 27V39M43 33H55" />
                    </svg>
                  </PlainButton>
                  <Search aria-label="Search tags" placeholder="Search" />
                  <PlainButton aria-label="Details">
                    <svg width="12" height="12" viewBox="0 0 36 36">
                      <path d="M12 0 36 18 12 36Z" fill={K} />
                      <rect x="2" y="7" width="18" height="21" fill="#e8f4ff" stroke={K} strokeWidth="2" />
                      <rect x="4" y="9" width="14" height="6" fill={BLUE} />
                    </svg>
                  </PlainButton>
                </SearchRow>
                <Table>
                  <thead>
                    <tr>
                      <Th $w={21} aria-label="Visible" />
                      <Th>
                        <HeadName>
                          Name
                          <Chevron />
                        </HeadName>
                      </Th>
                      <Th $w={21} aria-label="Color" />
                      <Th $w={52}>Dashes</Th>
                      <Th $w={22} aria-label="Active" />
                    </tr>
                  </thead>
                  <tbody>
                    <Row $kind="plain">
                      <Td $pad={6}>
                        <Eye />
                      </Td>
                      <Td $pad={2}>Untagged</Td>
                      <Td $pad={6}>
                        <Swatch type="color" defaultValue="#ff4f55" aria-label="Untagged color" />
                      </Td>
                      <Td $pad={4}>Default</Td>
                      <Td $pad={8}>
                        <svg width="11" height="11" viewBox="0 0 33 33">
                          <path d="M2 31 6 24 27 3 31 6 10 27Z" fill="#b5222a" stroke="#4a1014" strokeWidth="1.5" />
                        </svg>
                      </Td>
                    </Row>
                    <Row $kind="selected">
                      <Td $pad={6}>
                        <Eye />
                      </Td>
                      <Td $pad={2} colSpan={4}>
                        <Folder>
                          <Tri open />
                          1st Floor Guest Bathroom-2
                        </Folder>
                      </Td>
                    </Row>
                    {tags.map(([name, color]) => (
                      <Row key={name} $kind="plain">
                        <Td $pad={6}>
                          <Eye />
                        </Td>
                        <Td $pad={16}>{name}</Td>
                        <Td $pad={6}>
                          <Swatch type="color" defaultValue={color} aria-label={`${name} color`} />
                        </Td>
                        <Td $pad={4}>Default</Td>
                        <Td />
                      </Row>
                    ))}
                    {folders.map((name) => (
                      <Row key={name} $kind="folder">
                        <Td $pad={6}>
                          <Eye />
                        </Td>
                        <Td $pad={2} colSpan={4}>
                          <Folder>
                            <Tri />
                            {name}
                          </Folder>
                        </Td>
                      </Row>
                    ))}
                  </tbody>
                </Table>
              </Panels>
              <ScrollBar>
                <Chevron />
                <Track>
                  <Thumb />
                </Track>
                <Chevron down />
              </ScrollBar>
            </TrayBody>
          </Tray>
        </Main>

        <StatusBar>
          <svg width="12" height="12" viewBox="0 0 36 36">
            <circle cx="18" cy="18" r="16" fill="#f5f5f5" stroke="#999" strokeWidth="2.5" />
            <path d="M18 29 12 16a6 6 0 1 1 12 0Z" fill="#999" />
          </svg>
          <svg width="12" height="12" viewBox="0 0 36 36">
            <circle cx="18" cy="18" r="15" fill="#fff" stroke={K} strokeWidth="3.5" />
            <path d="M18 15V28M13 15H18M13 28H23M18 7V11" stroke={K} strokeWidth="4" />
          </svg>
          <Hint>Click or drag to select objects. Shift = Add/Subtract. Ctrl = Add. Shift + Ctrl = Subtract.</Hint>
          <Measure>
            Measurements
            <MeasureInput />
          </Measure>
        </StatusBar>
      </Shell>
    </>
  );
}
